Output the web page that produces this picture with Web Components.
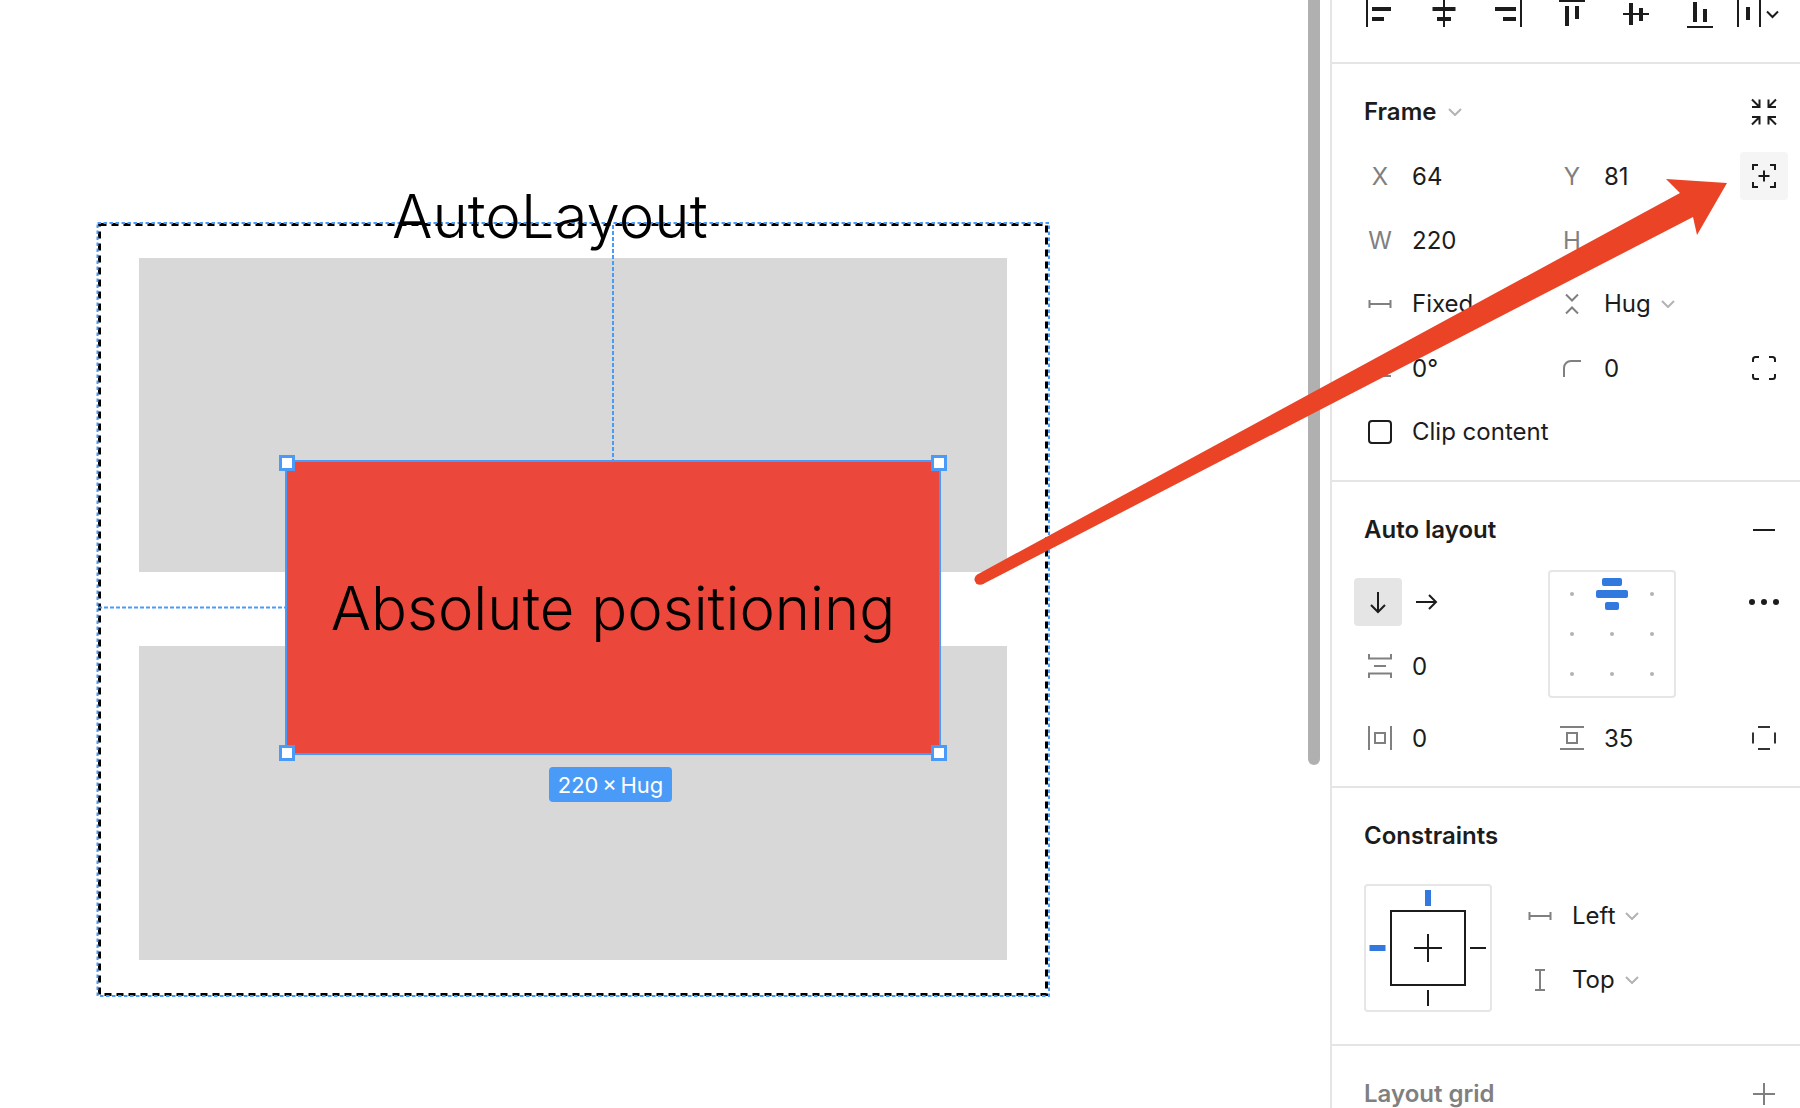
<!DOCTYPE html>
<html><head><meta charset="utf-8">
<style>html,body{margin:0;padding:0;background:#fff;overflow:hidden}</style>
</head><body>
<fig-app>
  <fig-canvas slot="canvas">
    <gray-block style="left:139px;top:258px;width:868px;height:314px"></gray-block>
    <gray-block style="left:139px;top:646px;width:868px;height:314px"></gray-block>
    <frame-outline></frame-outline>
    <canvas-title style="left:392px;top:180px">AutoLayout</canvas-title>
    <guide-lines></guide-lines>
    <selected-frame style="left:285px;top:460px;width:656px;height:295px">Absolute positioning</selected-frame>
    <size-label style="left:549px;top:767px">220 × Hug</size-label>
    <scroll-thumb></scroll-thumb>
  </fig-canvas>
  <inspector-panel slot="panel">
    <align-bar></align-bar>

    <prop-section>
      <prop-head chevron>Frame
        <svg slot="action" width="48" height="48" viewBox="0 0 48 48" fill="none" stroke="#1c1c1c" stroke-width="2"><path d="M12 11.500l7.500 7.500M12 19h7.500v-7.500M36 11.500l-7.500 7.500M36 19h-7.500v-7.500M12 36.500l7.500-7.500M12 29h7.500v7.500M36 36.500l-7.500-7.500M36 29h-7.500v7.500"/></svg>
      </prop-head>
      <prop-row>
        <prop-field num><span slot="icon" class="l" style="color:#808080">X</span>64</prop-field>
        <prop-field num><span slot="icon" style="color:#808080">Y</span>81</prop-field>
        <icon-btn active><svg width="48" height="48" viewBox="0 0 48 48" fill="none" stroke="#1c1c1c" stroke-width="2"><path d="M13 18v-5h5M30 13h5v5M35 30v5h-5M18 35h-5v-5M24 18.500v11M18.500 24h11"/></svg></icon-btn>
      </prop-row>
      <prop-row>
        <prop-field num><span slot="icon" style="color:#808080">W</span>220</prop-field>
        <prop-field num><span slot="icon" style="color:#808080">H</span></prop-field>
      </prop-row>
      <prop-row>
        <prop-field><svg slot="icon" width="32" height="32" viewBox="0 0 32 32" fill="none" stroke="#808080" stroke-width="2"><path d="M5.500 12v8M26.500 12v8M5.500 16h21"/></svg>Fixed</prop-field>
        <prop-field><svg slot="icon" width="32" height="32" viewBox="0 0 32 32" fill="none" stroke="#808080" stroke-width="2"><path d="M10 6.500l6 6 6-6M10 25.500l6-6 6 6"/></svg>Hug<chev-down></chev-down></prop-field>
      </prop-row>
      <prop-row>
        <prop-field num><svg slot="icon" width="32" height="32" viewBox="0 0 32 32" fill="none" stroke="#808080" stroke-width="2"><path d="M5 24h22"/></svg>0°</prop-field>
        <prop-field num><svg slot="icon" width="32" height="32" viewBox="0 0 32 32" fill="none" stroke="#808080" stroke-width="2"><path d="M8 25v-9a7 7 0 0 1 7-7h10"/></svg>0</prop-field>
        <icon-btn><svg width="48" height="48" viewBox="0 0 48 48" fill="none" stroke="#1c1c1c" stroke-width="2"><path d="M13 18v-2.500A2.500 2.500 0 0 1 15.500 13H19M29 13h3.500A2.500 2.500 0 0 1 35 15.500V18M35 30v2.500a2.500 2.500 0 0 1-2.500 2.500H29M19 35h-3.500a2.500 2.500 0 0 1-2.500-2.500V30"/></svg></icon-btn>
      </prop-row>
      <prop-row>
        <prop-field><svg slot="icon" width="32" height="32" viewBox="0 0 32 32" fill="none" stroke="#1c1c1c" stroke-width="2"><rect x="5" y="5" width="22" height="22" rx="3"/></svg>Clip content</prop-field>
      </prop-row>
    </prop-section>

    <prop-section>
      <prop-head>Auto layout
        <svg slot="action" width="48" height="48" viewBox="0 0 48 48" fill="none" stroke="#1c1c1c" stroke-width="2"><path d="M13 24h22"/></svg>
      </prop-head>
      <auto-layout-body>
        <dir-toggle style="grid-area:1/1"></dir-toggle>
        <align-grid style="grid-area:1/2/3/3"></align-grid>
        <icon-btn style="grid-area:1/3"><svg width="48" height="48" viewBox="0 0 48 48" fill="#1c1c1c"><circle cx="12" cy="24" r="3"/><circle cx="24" cy="24" r="3"/><circle cx="36" cy="24" r="3"/></svg></icon-btn>
        <prop-field num style="grid-area:2/1"><svg slot="icon" width="32" height="32" viewBox="0 0 32 32" fill="none" stroke="#808080" stroke-width="2"><path d="M5 4v4.500h22V4M10 16h12M5 28v-4.500h22V28"/></svg>0</prop-field>
        <prop-field num style="grid-area:4/1"><svg slot="icon" width="32" height="32" viewBox="0 0 32 32" fill="none" stroke="#808080" stroke-width="2"><path d="M5 4v24M27 4v24"/><rect x="11" y="11" width="10" height="10"/></svg>0</prop-field>
        <prop-field num style="grid-area:4/2"><svg slot="icon" width="32" height="32" viewBox="0 0 32 32" fill="none" stroke="#808080" stroke-width="2"><path d="M4 5h24M4 27h24"/><rect x="11" y="11" width="10" height="10"/></svg>35</prop-field>
        <icon-btn style="grid-area:4/3"><svg width="48" height="48" viewBox="0 0 48 48" fill="none" stroke="#333" stroke-width="2"><path d="M18 13h12M18 35h12M13 18.500v11M35 18.500v11"/></svg></icon-btn>
      </auto-layout-body>
    </prop-section>

    <prop-section>
      <prop-head>Constraints</prop-head>
      <constraints-body>
        <constraint-box></constraint-box>
        <constraint-list>
          <prop-field><svg slot="icon" width="32" height="32" viewBox="0 0 32 32" fill="none" stroke="#808080" stroke-width="2"><path d="M5.500 12v8M26.500 12v8M5.500 16h21"/></svg>Left<chev-down></chev-down></prop-field>
          <prop-field><svg slot="icon" width="32" height="32" viewBox="0 0 32 32" fill="none" stroke="#808080" stroke-width="2"><path d="M11 6h10M11 26h10M16 6v20"/></svg>Top<chev-down></chev-down></prop-field>
        </constraint-list>
      </constraints-body>
    </prop-section>

    <prop-section muted>
      <prop-head>Layout grid
        <svg slot="action" width="48" height="48" viewBox="0 0 48 48" fill="none" stroke="#808080" stroke-width="2"><path d="M13 24h22M24 13v22"/></svg>
      </prop-head>
    </prop-section>
  </inspector-panel>
  <arrow-overlay slot="overlay"></arrow-overlay>
</fig-app>
<script>
function def(name, html){
  customElements.define(name, class extends HTMLElement{
    constructor(){ super(); this.attachShadow({mode:'open'}).innerHTML = html; }
  });
}
const PANEL_FONT = `font-family:Inter,"Noto Sans",sans-serif;`;
const CANVAS_FONT = `font-family:Inter,"Liberation Sans",sans-serif;font-weight:320;`;

def('fig-app', `<style>
  :host{display:flex;width:1800px;height:1108px;position:relative;overflow:hidden;background:#fff}
</style><slot name="canvas"></slot><slot name="panel"></slot><slot name="overlay"></slot>`);

def('fig-canvas', `<style>
  :host{display:block;position:relative;flex:0 0 1330px;height:1108px;background:#fff;overflow:hidden}
</style><slot></slot>`);

def('gray-block', `<style>:host{display:block;position:absolute;background:#d8d8d8}</style>`);

def('frame-outline', `<style>:host{display:block;position:absolute;left:90px;top:216px;width:970px;height:790px}
 svg{display:block}</style>
 <svg width="970" height="790" fill="none">
  <rect x="9.500" y="8.500" width="947" height="770" stroke="#000" stroke-width="3" stroke-dasharray="7 5"/>
  <rect x="7.500" y="7" width="951.500" height="773" stroke="#4a9bf8" stroke-width="2" stroke-dasharray="3.500 2.500"/>
 </svg>`);

def('canvas-title', `<style>:host{display:block;position:absolute;${CANVAS_FONT}font-size:60px;line-height:72px;color:#000;white-space:nowrap}</style><slot></slot>`);

def('guide-lines', `<style>:host{display:block;position:absolute;left:0;top:0}
 svg{display:block}</style>
 <svg width="1000" height="700" fill="none" stroke="#4a9bf8" stroke-width="2" stroke-dasharray="4 2">
  <path d="M613 225V460"/><path d="M98 607.500H285"/>
 </svg>`);

def('selected-frame', `<style>
 :host{display:flex;position:absolute;box-sizing:border-box;align-items:center;justify-content:center;background:#eb473b;border:2px solid #4a9bf8;${CANVAS_FONT}font-size:59.800px;color:#000;white-space:nowrap}
 .h{position:absolute;width:16px;height:16px;box-sizing:border-box;background:#fff;border:3px solid #4a9bf8}
 .tl{left:-8px;top:-7px}.tr{right:-8px;top:-7px}.bl{left:-8px;bottom:-8px}.br{right:-8px;bottom:-8px}
</style><slot></slot><i class="h tl"></i><i class="h tr"></i><i class="h bl"></i><i class="h br"></i>`);

def('size-label', `<style>
 :host{display:flex;position:absolute;box-sizing:border-box;align-items:center;justify-content:center;width:123px;height:35px;background:#4a9bf8;color:#fff;border-radius:4px;${PANEL_FONT}font-size:22px;word-spacing:-2.500px;white-space:nowrap}
</style><slot></slot>`);

def('scroll-thumb', `<style>:host{display:block;position:absolute;left:1308px;top:-10px;width:12px;height:775px;background:#b0b0b0;border-radius:6px}</style>`);

def('inspector-panel', `<style>
 :host{display:flex;flex-direction:column;flex:0 0 470px;box-sizing:border-box;height:1108px;border-left:2px solid #e5e5e5;background:#fff;${PANEL_FONT}font-size:24px;color:#1c1c1c;overflow:hidden}
</style><slot></slot>`);

const ic = (d)=>`<svg width="64" height="27" viewBox="0 0 32 27" fill="#1c1c1c" style="display:block;overflow:visible"><g>${d}</g></svg>`;
def('align-bar', `<style>
 :host{display:flex;flex:0 0 62px;box-sizing:content-box;padding-left:0;border-bottom:2px solid #e5e5e5;height:62px}
 svg{display:block;flex:0 0 64px}
</style><span style="flex:0 0 16px"></span>`
 + ic(`<rect x="2" y="0" width="2" height="27"/><rect x="8" y="7" width="19" height="4"/><rect x="8" y="17" width="12" height="4"/>`)
 + ic(`<rect x="15" y="0" width="2" height="27"/><rect x="4.500" y="7" width="23" height="4"/><rect x="9" y="17" width="14" height="4"/>`)
 + ic(`<rect x="28" y="0" width="2" height="27"/><rect x="3" y="7" width="21" height="4"/><rect x="11" y="17" width="13" height="4"/>`)
 + ic(`<rect x="3" y="0" width="26" height="2"/><rect x="9" y="6" width="4" height="20"/><rect x="19" y="6" width="4" height="13"/>`)
 + ic(`<rect x="3" y="13" width="26" height="2"/><rect x="9" y="3" width="4" height="22"/><rect x="19" y="8" width="4" height="13"/>`)
 + ic(`<rect x="3" y="26" width="26" height="2"/><rect x="9" y="2" width="4" height="20"/><rect x="19" y="9" width="4" height="13"/>`)
 + `<svg width="64" height="27" viewBox="0 0 64 27" style="display:block"><g fill="#1c1c1c"><rect x="5" y="0" width="2" height="27"/><rect x="27" y="0" width="2" height="27"/><rect x="14" y="7" width="4" height="13"/></g><path d="M35 11.500l5.500 5.500 5.500-5.500" fill="none" stroke="#1c1c1c" stroke-width="2"/></svg>`);

def('prop-section', `<style>
 :host{display:block;box-sizing:border-box;padding:16px 0 16px 32px;border-bottom:2px solid #e5e5e5;flex:none}
 :host([muted]){color:#808080;border-bottom:0;padding-bottom:0}
</style><slot></slot>`);

customElements.define('prop-head', class extends HTMLElement{
  constructor(){ super();
    this.attachShadow({mode:'open'}).innerHTML = `<style>
      :host{display:flex;align-items:center;box-sizing:border-box;height:64px;padding-bottom:2px;font-weight:600;position:relative;width:424px}
      .a{position:absolute;left:376px;top:8px;height:48px;display:block}
      chev-down{margin-left:12px}
    </style><slot></slot>${this.hasAttribute('chevron')?'<chev-down></chev-down>':''}<span class="a"><slot name="action"></slot></span>`;
  }
});

def('prop-row', `<style>
 :host{display:grid;grid-template-columns:192px 184px 48px;height:64px;align-items:center;width:424px}
</style><slot></slot>`);

def('prop-field', `<style>
 :host{display:flex;align-items:center;height:64px;white-space:nowrap}
 .i{flex:0 0 32px;width:32px;height:32px;display:flex;align-items:center;justify-content:center;margin-right:16px;text-align:center}
 .t{display:flex;align-items:center;padding-bottom:2px}
 :host([num]) .t{padding-bottom:0}
</style><span class="i"><slot name="icon"></slot></span><span class="t"><slot></slot></span>`);

def('chev-down', `<style>:host{display:inline-block;width:14px;height:8px;margin-left:10px;margin-top:2px}
 svg{display:block}</style><svg width="14" height="8" viewBox="0 0 14 8" fill="none" stroke="#b3b3b3" stroke-width="2"><path d="M1 1l6 6 6-6"/></svg>`);

def('icon-btn', `<style>
 :host{display:flex;width:48px;height:48px;border-radius:4px;align-items:center;justify-content:center;align-self:center}
 :host([active]){background:#f5f5f5}
 ::slotted(svg){display:block}
</style><slot></slot>`);

def('auto-layout-body', `<style>
 :host{display:grid;margin-top:8px;grid-template-columns:192px 184px 48px;grid-template-rows:64px 64px 8px 64px;align-items:center;width:424px}
</style><slot></slot>`);

def('dir-toggle', `<style>
 :host{display:flex;align-items:center;margin-left:-10px}
 span{display:flex;width:48px;height:48px;align-items:center;justify-content:center;border-radius:4px}
 .on{background:#e5e5e5}
 svg{display:block}
</style>
<span class="on"><svg width="24" height="24" viewBox="0 0 24 24" fill="none" stroke="#1c1c1c" stroke-width="2"><path d="M12 2v20M5 15l7 7 7-7"/></svg></span>
<span><svg width="24" height="24" viewBox="0 0 24 24" fill="none" stroke="#1c1c1c" stroke-width="2"><path d="M2 12h20M15 5l7 7-7 7"/></svg></span>`);

def('align-grid', `<style>
 :host{display:block;box-sizing:border-box;width:128px;height:128px;margin-left:-8px;border:2px solid #e6e6e6;border-radius:4px;align-self:start;position:relative}
 svg{display:block;position:absolute;left:-2px;top:-2px}
</style>
<svg width="128" height="128" viewBox="0 0 128 128"><g fill="#b3b3b3">
 <circle cx="24" cy="24" r="2"/><circle cx="104" cy="24" r="2"/>
 <circle cx="24" cy="64" r="2"/><circle cx="64" cy="64" r="2"/><circle cx="104" cy="64" r="2"/>
 <circle cx="24" cy="104" r="2"/><circle cx="64" cy="104" r="2"/><circle cx="104" cy="104" r="2"/></g>
 <g fill="#3178df"><rect x="54" y="8" width="20" height="8" rx="2"/><rect x="48" y="20" width="32" height="8" rx="2"/><rect x="57" y="32" width="14" height="8" rx="2"/></g>
</svg>`);

def('constraints-body', `<style>:host{display:flex;margin-top:16px;margin-bottom:16px;height:128px;align-items:flex-start}</style><slot></slot>`);
def('constraint-list', `<style>:host{display:flex;flex-direction:column;margin-left:32px}</style><slot></slot>`);
def('constraint-box', `<style>
 :host{display:block;width:128px;height:128px;flex:none}
 svg{display:block}
</style>
<svg width="128" height="128" viewBox="0 0 128 128" fill="none">
 <rect x="1" y="1" width="126" height="126" rx="3" stroke="#e6e6e6" stroke-width="2"/>
 <rect x="27" y="27" width="74" height="74" stroke="#1c1c1c" stroke-width="2"/>
 <path d="M50 64h28M64 50v28M106 64h16M64 106v16" stroke="#1c1c1c" stroke-width="2"/>
 <rect x="61" y="6" width="6" height="16" fill="#3178df"/>
 <rect x="5.500" y="61" width="16" height="6" fill="#3178df"/>
</svg>`);

def('arrow-overlay', `<style>:host{display:block;position:absolute;left:0;top:0;width:1800px;height:1108px;pointer-events:none}
 svg{display:block}</style>
 <svg width="1800" height="1108"><g fill="#eb4326">
  <circle cx="980" cy="579.300" r="5.500"/>
  <polygon points="977.400,574.400 1680,193 1666,179 1727,183 1697,235 1693,217 982.600,584.200"/>
 </g></svg>`);
</script>
</body></html>
